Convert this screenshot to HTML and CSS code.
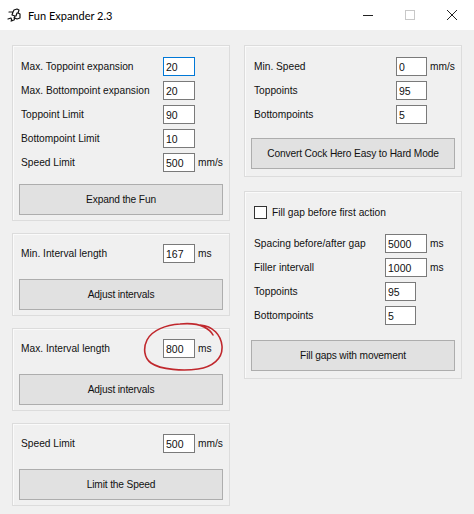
FILE: index.html
```html
<!DOCTYPE html>
<html>
<head>
<meta charset="utf-8">
<link rel="stylesheet" href="styles.css">
</head>
<body>
<div class="window">
  <div class="titlebar">
    <svg class="appicon" width="16" height="16" viewBox="0 0 16 16">
      <path d="M2 5 L6 5 L7 3 L10 2 L12 3 L11 6 L13 7 L13 11 L10 12 L8 11 L7 13 L4 14 M6 5 L5 8 L8 9 L7 11 M10 6 L9 9 M1 12 L4 11 L5 14" fill="none" stroke="#111" stroke-width="1.2" stroke-linejoin="round" stroke-linecap="round"/>
    </svg>
    <span class="title">Fun Expander 2.3</span>
    <div class="controls">
      <svg width="12" height="12" viewBox="0 0 12 12" class="ctl"><path d="M1 6.5 H11" stroke="#222" stroke-width="1"/></svg>
      <svg width="12" height="12" viewBox="0 0 12 12" class="ctl"><rect x="1.5" y="1.5" width="9" height="9" fill="none" stroke="#c8c8c8" stroke-width="1"/></svg>
      <svg width="12" height="12" viewBox="0 0 12 12" class="ctl"><path d="M1 1 L11 11 M11 1 L1 11" stroke="#222" stroke-width="1"/></svg>
    </div>
  </div>
  <div class="client">
    <div class="col">
      <div class="panel p1">
        <div class="row"><span class="lbl">Max. Toppoint expansion</span><input class="inp focus" value="20"></div>
        <div class="row"><span class="lbl">Max. Bottompoint expansion</span><input class="inp" value="20"></div>
        <div class="row"><span class="lbl">Toppoint Limit</span><input class="inp" value="90"></div>
        <div class="row"><span class="lbl">Bottompoint Limit</span><input class="inp" value="10"></div>
        <div class="row"><span class="lbl">Speed Limit</span><input class="inp" value="500"><span class="unit">mm/s</span></div>
        <button class="btn b1">Expand the Fun</button>
      </div>
      <div class="panel p2">
        <div class="row"><span class="lbl">Min. Interval length</span><input class="inp" value="167"><span class="unit">ms</span></div>
        <button class="btn b2">Adjust intervals</button>
      </div>
      <div class="panel p2 annotated">
        <div class="row"><span class="lbl">Max. Interval length</span><input class="inp" value="800"><span class="unit">ms</span></div>
        <button class="btn b2">Adjust intervals</button>
        <svg class="circle" width="90" height="56" viewBox="0 0 90 56">
          <path d="M60 3 C73 4 81 13 82 24 C83 37 72 45 58 47 C44 49 21 48 11 41 C4 36 3 26 7 18 C12 8 26 3 40 2 C50 1 58 2 64 5 C70 8 72 11 73 13" fill="none" stroke="#c0282d" stroke-width="1.6" stroke-linecap="round"/>
        </svg>
      </div>
      <div class="panel p2">
        <div class="row"><span class="lbl">Speed Limit</span><input class="inp" value="500"><span class="unit">mm/s</span></div>
        <button class="btn b2">Limit the Speed</button>
      </div>
    </div>
    <div class="col">
      <div class="panel pa">
        <div class="row"><span class="lbl">Min. Speed</span><input class="inp w31" value="0"><span class="unit">mm/s</span></div>
        <div class="row"><span class="lbl">Toppoints</span><input class="inp w31" value="95"></div>
        <div class="row"><span class="lbl">Bottompoints</span><input class="inp w31" value="5"></div>
        <button class="btn ba">Convert Cock Hero Easy to Hard Mode</button>
      </div>
      <div class="panel pb">
        <label class="check"><span class="box"></span><span>Fill gap before first action</span></label>
        <div class="row"><span class="lbl narrow">Spacing before/after gap</span><input class="inp w42" value="5000"><span class="unit">ms</span></div>
        <div class="row"><span class="lbl narrow">Filler intervall</span><input class="inp w42" value="1000"><span class="unit">ms</span></div>
        <div class="row"><span class="lbl narrow">Toppoints</span><input class="inp w31" value="95"></div>
        <div class="row"><span class="lbl narrow">Bottompoints</span><input class="inp w31" value="5"></div>
        <button class="btn bb">Fill gaps with movement</button>
      </div>
    </div>
  </div>
</div>
</body>
</html>
```
FILE: styles.css
```css
html, body {
  margin: 0;
  padding: 0;
}
body {
  width: 474px;
  height: 514px;
  background: #f0f0f0;
  font-family: "Liberation Sans", Arial, sans-serif;
  font-size: 10.2px;
  color: #111;
  overflow: hidden;
}
.window {
  width: 474px;
  height: 514px;
  background: #f0f0f0;
}
.titlebar {
  height: 30px;
  background: #fff;
  display: flex;
  align-items: center;
  position: relative;
}
.appicon {
  margin-left: 7px;
  margin-right: 5px;
}
.title {
  font-family: Lato, "Open Sans", sans-serif;
  font-size: 11px;
  color: #000;
}
.controls {
  margin-left: auto;
  display: flex;
  gap: 30px;
  margin-right: 16px;
}
.ctl {
  display: block;
}
.client {
  display: flex;
  gap: 14px;
  padding: 15px 12px 0 12px;
}
.col {
  width: 218px;
  display: flex;
  flex-direction: column;
  gap: 12px;
}
.col + .col {
  gap: 14px;
}
.panel {
  border: 1px solid #dcdcdc;
  box-shadow: inset 1px 1px 0 #fafafa;
  padding: 11px 6px 5px 6px;
  position: relative;
}
.p2 {
  padding-top: 10px;
}
.row {
  display: flex;
  align-items: center;
  height: 19px;
  margin-bottom: 5px;
}
.row:last-of-type {
  margin-bottom: 0;
}
.lbl {
  width: 144px;
  flex: none;
  padding-left: 2px;
  box-sizing: border-box;
  white-space: nowrap;
}
.lbl.narrow {
  width: 134px;
  padding-left: 3px;
}
.pa .lbl {
  padding-left: 3px;
  width: 145px;
}
.inp {
  width: 32px;
  height: 19px;
  box-sizing: border-box;
  border: 1px solid #7a7a7a;
  background: #fff;
  font: inherit;
  font-size: 10.5px;
  padding: 0 0 0 2px;
  margin: 0;
  outline: none;
  color: #111;
}
.inp.focus {
  border-color: #0078d7;
}
.w31 { width: 31px; }
.w42 { width: 42px; }
.unit {
  margin-left: 3px;
}
.btn {
  display: block;
  width: 100%;
  height: 31px;
  background: #e1e1e1;
  border: 1px solid #adadad;
  font: inherit;
  font-size: 10.2px;
  letter-spacing: -0.15px;
  color: #111;
  margin: 0;
  padding: 0;
}
.b1 { margin-top: 12px; }
.b2 { margin-top: 16px; }
.pa .btn { margin-top: 14px; }
.pa { padding-bottom: 7px; }
.pb { padding-top: 14px; padding-bottom: 7px; }
.bb { margin-top: 15px; }
.check {
  display: flex;
  align-items: center;
  height: 13px;
  margin-bottom: 15px;
  padding-left: 3px;
  gap: 5px;
}
.box {
  width: 13px;
  height: 13px;
  box-sizing: border-box;
  border: 1px solid #333;
  background: #fff;
}
.circle {
  position: absolute;
  left: 127px;
  top: -7px;
}
```
